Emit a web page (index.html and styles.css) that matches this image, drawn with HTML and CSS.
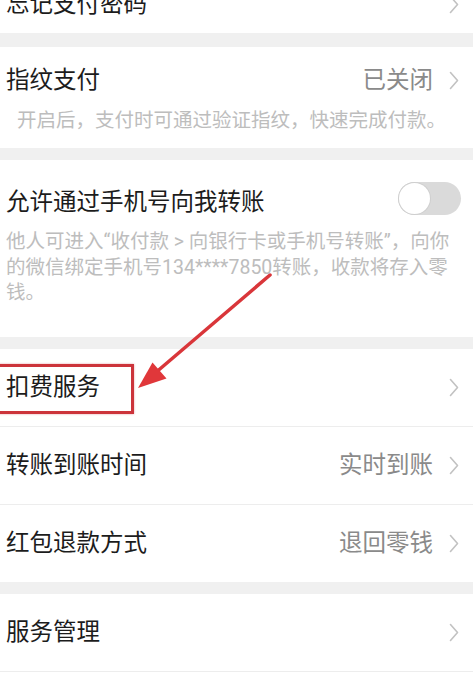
FILE: index.html
```html
<!DOCTYPE html>
<html lang="zh-CN">
<head>
<meta charset="utf-8">
<title>支付设置</title>
<link rel="stylesheet" href="styles.css">
</head>
<body>
<div class="page">
  <section class="group group-top">
    <div class="row-cut">
      <span class="title">忘记支付密码</span>
      <svg class="chev" viewBox="0 0 10 19"><path d="M1.5 1.5 L8.5 9.5 L1.5 17.5"/></svg>
    </div>
  </section>

  <section class="group group-finger">
    <div class="line">
      <span class="title">指纹支付</span>
      <span class="right"><span class="value">已关闭</span><svg class="chev" viewBox="0 0 10 19"><path d="M1.5 1.5 L8.5 9.5 L1.5 17.5"/></svg></span>
    </div>
    <p class="desc desc-indent">开启后，支付时可通过验证指纹，快速完成付款。</p>
  </section>

  <section class="group group-phone">
    <div class="line line-top">
      <span class="title title-drop">允许通过手机号向我转账</span>
      <span class="toggle"><span class="knob"></span></span>
    </div>
    <p class="desc">他人可进入“收付款 &gt; 向银行卡或手机号转账”，向你<br>的微信绑定手机号134****7850转账，收款将存入零<br>钱。</p>
  </section>

  <section class="group">
    <div class="row">
      <span class="title">扣费服务</span>
      <span class="right"><svg class="chev" viewBox="0 0 10 19"><path d="M1.5 1.5 L8.5 9.5 L1.5 17.5"/></svg></span>
    </div>
    <div class="row">
      <span class="title">转账到账时间</span>
      <span class="right"><span class="value">实时到账</span><svg class="chev" viewBox="0 0 10 19"><path d="M1.5 1.5 L8.5 9.5 L1.5 17.5"/></svg></span>
    </div>
    <div class="row row-last">
      <span class="title">红包退款方式</span>
      <span class="right"><span class="value">退回零钱</span><svg class="chev" viewBox="0 0 10 19"><path d="M1.5 1.5 L8.5 9.5 L1.5 17.5"/></svg></span>
    </div>
  </section>

  <section class="group group-end">
    <div class="row">
      <span class="title">服务管理</span>
      <span class="right"><svg class="chev" viewBox="0 0 10 19"><path d="M1.5 1.5 L8.5 9.5 L1.5 17.5"/></svg></span>
    </div>
  </section>

  <div class="annot-box"></div>
  <svg class="annot-arrow" viewBox="0 0 473 686" width="473" height="686">
    <line x1="270" y1="275" x2="154" y2="374" class="arrow-line"/>
    <polygon points="138,388 152.5,362.5 166.5,378.5" class="arrow-head"/>
  </svg>
</div>
</body>
</html>
```

FILE: styles.css
```css
* { box-sizing: border-box; }
html, body {
  margin: 0;
  padding: 0;
  background: #f0f0f0;
}
body {
  font-family: Roboto, "Noto Sans CJK SC", sans-serif;
  color: #1c1c1c;
  width: 473px;
  height: 686px;
  overflow: hidden;
}
.page {
  position: relative;
  width: 473px;
  height: 686px;
  overflow: hidden;
}
.group {
  background: #ffffff;
  margin-bottom: 12px;
}
.group-top {
  height: 33px;
  margin-bottom: 14px;
  overflow: hidden;
  display: flex;
  align-items: flex-end;
}
.row-cut {
  flex: 1;
  display: flex;
  justify-content: space-between;
  align-items: center;
  padding: 0 14px 15px 6px;
}
.title {
  font-size: 23.5px;
  line-height: 28px;
  color: #1c1c1c;
  white-space: nowrap;
}
.right {
  display: flex;
  align-items: center;
  gap: 16px;
}
.value {
  font-size: 23.5px;
  line-height: 28px;
  color: #8a8a8a;
}
.chev {
  width: 10px;
  height: 19px;
  display: block;
}
.chev path {
  fill: none;
  stroke: #c2c2c2;
  stroke-width: 1.6;
  stroke-linecap: round;
  stroke-linejoin: round;
}
.group-finger {
  height: 101px;
  padding: 19px 14px 0 6px;
}
.line {
  display: flex;
  justify-content: space-between;
  align-items: center;
}
.desc {
  margin: 13.5px 0 0 0;
  font-size: 19.5px;
  line-height: 25.5px;
  color: #bdbdbd;
  white-space: nowrap;
}
.desc-indent {
  padding-left: 11px;
}
.group-phone {
  height: 177px;
  padding: 22px 12px 0 6px;
}
.group-phone .desc {
  margin-top: 13px;
}
.line-top {
  align-items: flex-start;
}
.title-drop {
  margin-top: 6px;
}
.toggle {
  position: relative;
  width: 63px;
  height: 33px;
  border-radius: 17px;
  background: #dadada;
  display: block;
}
.knob {
  position: absolute;
  left: 1px;
  top: 1px;
  width: 31px;
  height: 31px;
  border-radius: 50%;
  background: #ffffff;
  box-shadow: 0 0 0 1px #cfcfcf;
}
.row {
  height: 78px;
  padding: 0 14px 0 6px;
  display: flex;
  justify-content: space-between;
  align-items: center;
  padding-bottom: 1px;
  border-bottom: 1px solid #ededed;
}
.row-last {
  height: 77px;
  border-bottom: none;
}
.group-end {
  height: 200px;
}
.annot-box {
  position: absolute;
  left: -4px;
  top: 364px;
  width: 138px;
  height: 50px;
  border: 3px solid #cc343b;
  box-shadow: 0 0 2px rgba(204, 52, 59, 0.45);
}
.annot-arrow {
  position: absolute;
  left: 0;
  top: 0;
  pointer-events: none;
}
.arrow-line {
  stroke: #d9363a;
  stroke-width: 3.5;
  stroke-linecap: round;
}
.arrow-head {
  fill: #e0373a;
}
```
